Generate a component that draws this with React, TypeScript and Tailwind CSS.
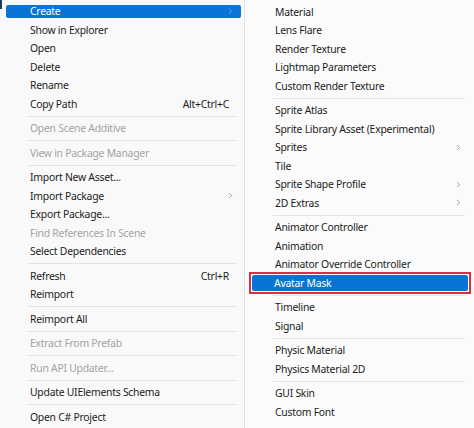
import { ChevronRight } from "lucide-react";

type Item =
  | { sep: true }
  | { label: string; disabled?: boolean; shortcut?: string; sub?: boolean; active?: boolean; marked?: boolean; sep?: false };

const LEFT: Item[] = [
  { label: "Create", sub: true, active: true },
  { label: "Show in Explorer" },
  { label: "Open" },
  { label: "Delete" },
  { label: "Rename" },
  { label: "Copy Path", shortcut: "Alt+Ctrl+C" },
  { sep: true },
  { label: "Open Scene Additive", disabled: true },
  { sep: true },
  { label: "View in Package Manager", disabled: true },
  { sep: true },
  { label: "Import New Asset..." },
  { label: "Import Package", sub: true },
  { label: "Export Package..." },
  { label: "Find References In Scene", disabled: true },
  { label: "Select Dependencies" },
  { sep: true },
  { label: "Refresh", shortcut: "Ctrl+R" },
  { label: "Reimport" },
  { sep: true },
  { label: "Reimport All" },
  { sep: true },
  { label: "Extract From Prefab", disabled: true },
  { sep: true },
  { label: "Run API Updater...", disabled: true },
  { sep: true },
  { label: "Update UIElements Schema" },
  { sep: true },
  { label: "Open C# Project" },
];

const RIGHT: Item[] = [
  { label: "Material" },
  { label: "Lens Flare" },
  { label: "Render Texture" },
  { label: "Lightmap Parameters" },
  { label: "Custom Render Texture" },
  { sep: true },
  { label: "Sprite Atlas" },
  { label: "Sprite Library Asset (Experimental)" },
  { label: "Sprites", sub: true },
  { label: "Tile" },
  { label: "Sprite Shape Profile", sub: true },
  { label: "2D Extras", sub: true },
  { sep: true },
  { label: "Animator Controller" },
  { label: "Animation" },
  { label: "Animator Override Controller" },
  { label: "Avatar Mask", marked: true },
  { sep: true },
  { label: "Timeline" },
  { label: "Signal" },
  { sep: true },
  { label: "Physic Material" },
  { label: "Physics Material 2D" },
  { sep: true },
  { label: "GUI Skin" },
  { label: "Custom Font" },
];

function Row({ item }: { item: Item }) {
  if (item.sep) {
    return (
      <div className="h-[6px] flex items-center pl-[22px] pr-[4px]">
        <div className="h-px w-full bg-[#e3e3e3]" />
      </div>
    );
  }
  const body = (
    <div
      className={
        "flex items-center h-full rounded-[2px] pr-[6px] " +
        (item.marked ? "pl-[22px] " : "pl-[24px] ") +
        (item.active || item.marked ? "bg-[#0a74d6] text-white" : item.disabled ? "text-[#a3a3a3]" : "text-[#1b1b1b]")
      }
    >
      <span className="flex-1 whitespace-nowrap">{item.label}</span>
      {item.shortcut && <span className="mr-[6px]">{item.shortcut}</span>}
      {item.sub && <ChevronRight size={9} strokeWidth={1.6} className={item.active ? "text-[#9cc3ee]" : "text-[#666]"} />}
    </div>
  );
  if (item.marked) {
    return (
      <div className="h-[18.5px] relative">
        <div className="absolute -left-[2px] -right-[2px] -top-[1.5px] -bottom-[1.5px] border-2 border-[#d6323f] p-px bg-white">
          {body}
        </div>
      </div>
    );
  }
  return <div className={item.active ? "h-[18.5px] py-[2.5px]" : "h-[18.5px]"}>{body}</div>;
}

export default function App() {
  return (
    <div
      className="flex w-[474px] h-[428px] overflow-hidden bg-white text-[10.4px] tracking-[-0.25px] leading-none"
      style={{ fontFamily: '"Noto Sans", "Open Sans", sans-serif' }}
    >
      <div className="w-[245px] shrink-0 bg-[#f9f9f9] border-r border-[#e2e2e2] pt-[2px] pl-[6px] pr-[3px] relative">
        <div className="absolute left-0 top-0 w-[2px] h-[9px] bg-[#1d3b63]" />
        {LEFT.map((it, i) => (
          <Row key={i} item={it} />
        ))}
      </div>
      <div className="flex-1 bg-[#fbfbfb] pt-[2.5px] pl-[6px] pr-[5px]">
        {RIGHT.map((it, i) => (
          <Row key={i} item={it} />
        ))}
      </div>
    </div>
  );
}
